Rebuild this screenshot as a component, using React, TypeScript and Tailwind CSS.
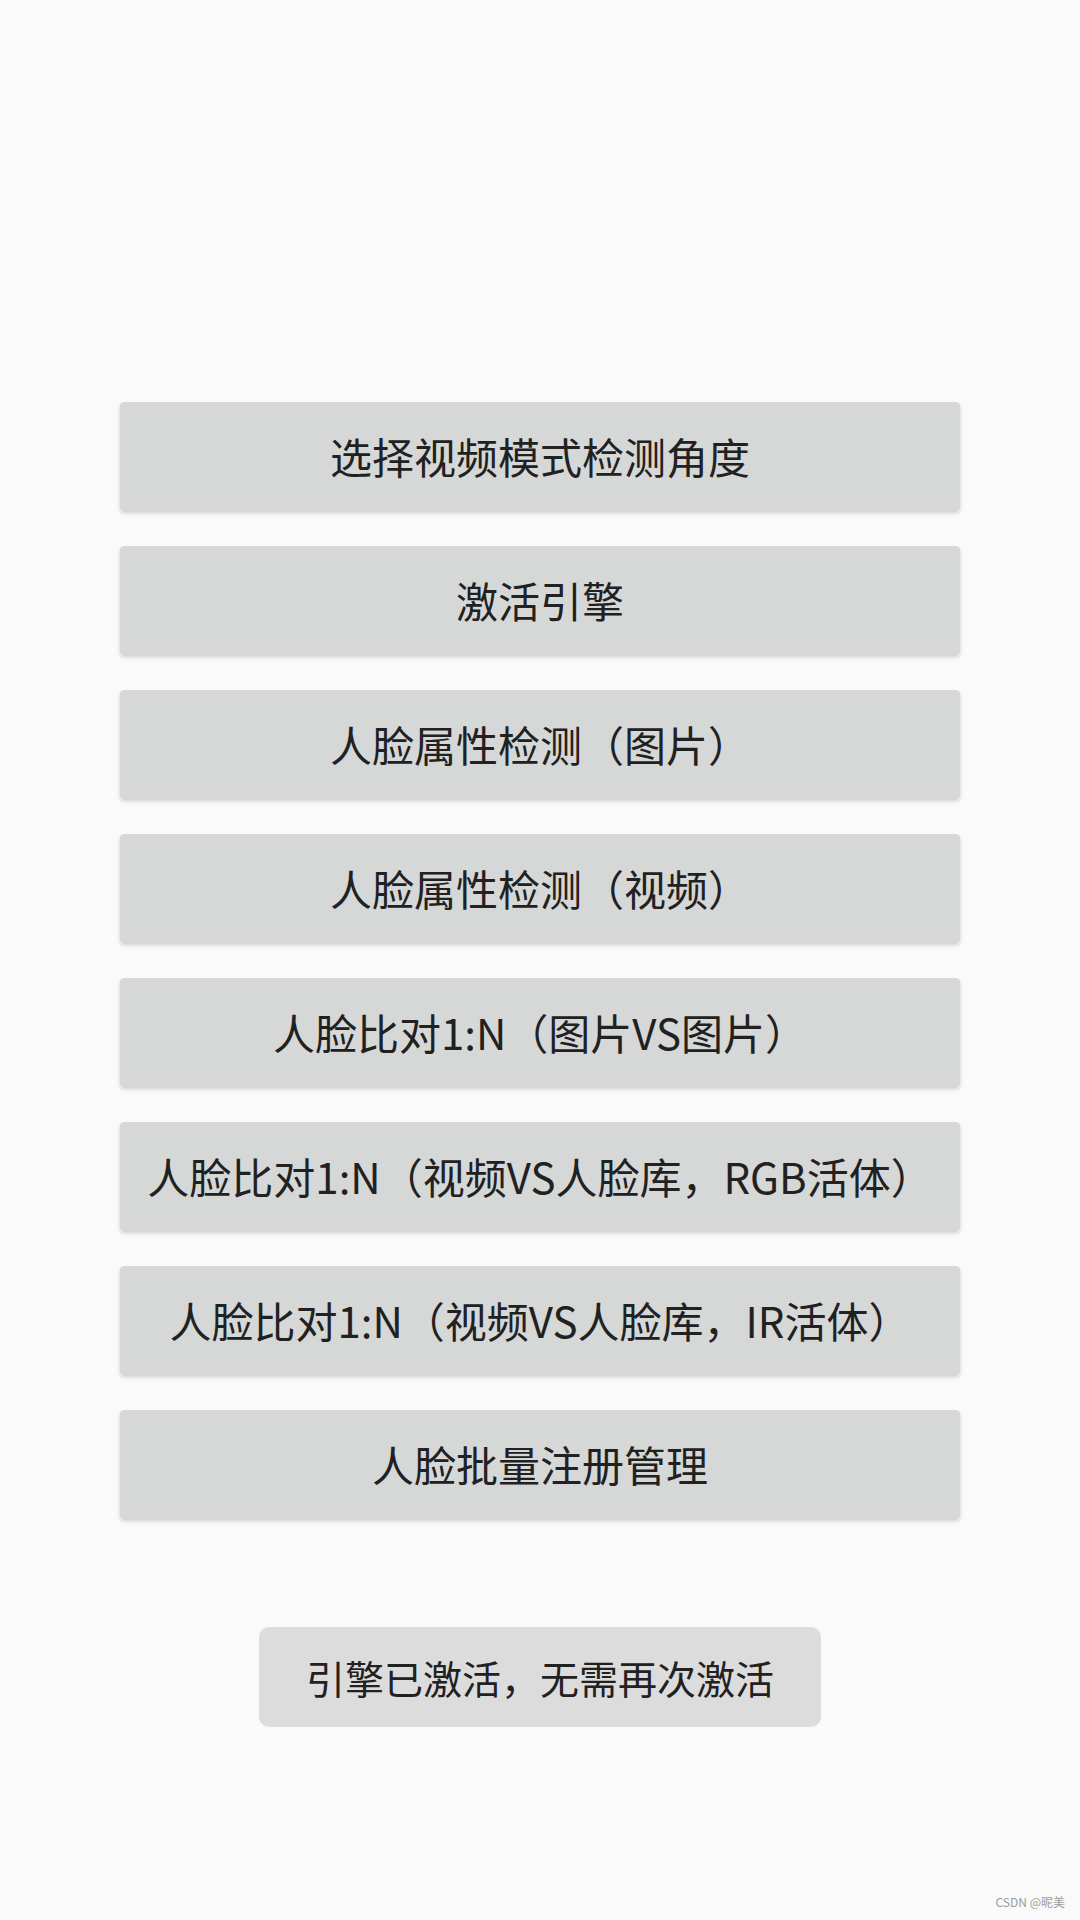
const items = [
  '选择视频模式检测角度',
  '激活引擎',
  '人脸属性检测（图片）',
  '人脸属性检测（视频）',
  '人脸比对1:N（图片VS图片）',
  '人脸比对1:N（视频VS人脸库，RGB活体）',
  '人脸比对1:N（视频VS人脸库，IR活体）',
  '人脸批量注册管理',
]

export default function App() {
  return (
    <div
      className="relative w-[1080px] h-[1920px] bg-[#fafafa] flex flex-col items-center pt-[402px]"
      style={{ fontFamily: '"Noto Sans CJK SC", "Noto Sans", sans-serif' }}
    >
      {/* Menu buttons */}
      <div className="w-[840px] flex flex-col gap-[36px]">
        {items.map((label) => (
          <button
            key={label}
            className="h-[108px] w-full rounded-[4px] bg-[#d6d7d7] text-[#212121] text-[42px] leading-none whitespace-nowrap shadow-[0_3px_4px_rgba(0,0,0,0.18)]"
          >
            {label}
          </button>
        ))}
      </div>

      {/* Status toast */}
      <div className="mt-[109px] w-[562px] h-[100px] rounded-[10px] bg-[#dcdcdc] flex items-center justify-center text-[39px] text-[#212121] leading-none">
        引擎已激活，无需再次激活
      </div>

      <div className="absolute right-[15px] bottom-[9px] text-[12px] text-[#9a9a9a]">
        CSDN @昵美
      </div>
    </div>
  )
}
